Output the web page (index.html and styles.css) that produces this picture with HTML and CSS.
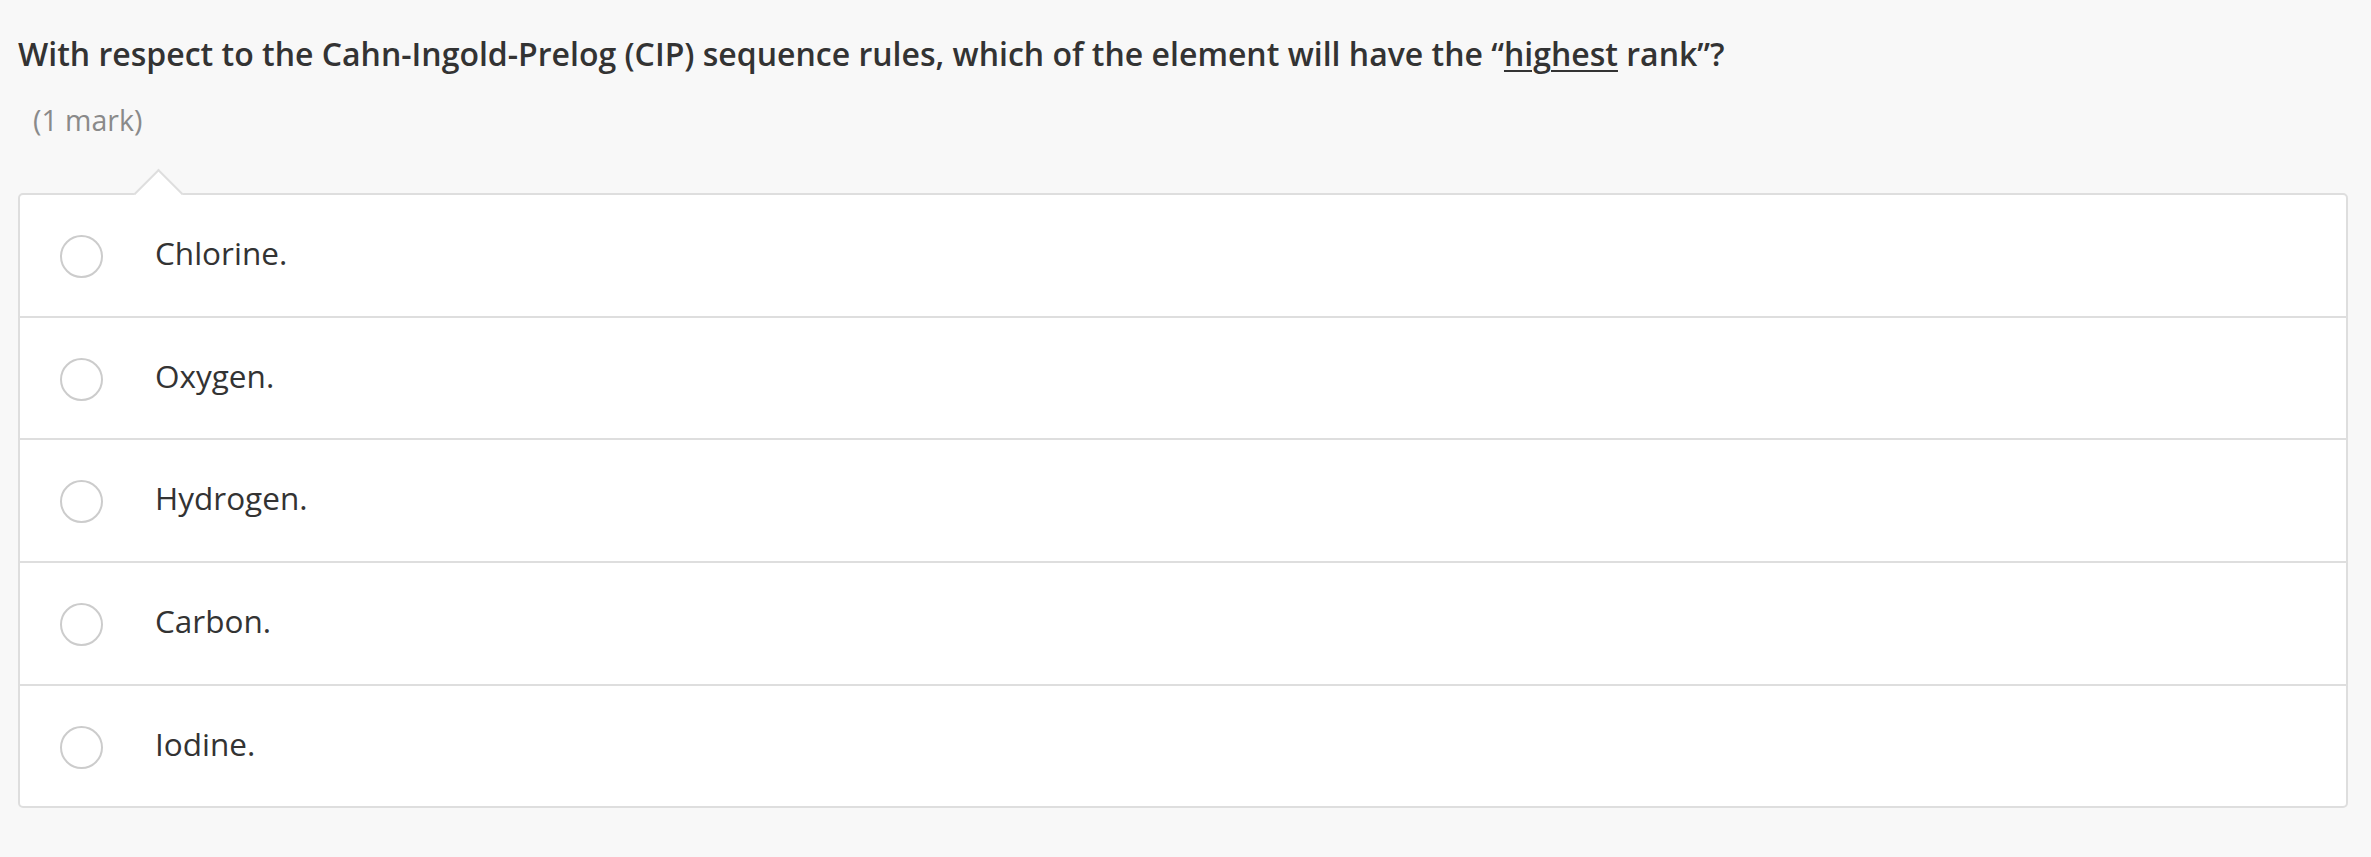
FILE: index.html
```html
<!DOCTYPE html>
<html>
<head>
<meta charset="utf-8">
<link rel="stylesheet" href="styles.css">
</head>
<body>
<div class="page">
  <h1 class="question">With respect to the Cahn-Ingold-Prelog (CIP) sequence rules, which of the element will have the “<u class="em">highest</u> rank”?</h1>
  <div class="mark">(1 mark)</div>
  <div class="card">
    <span class="arrow"></span>
    <label class="option"><span class="radio"></span><span class="label">Chlorine.</span></label>
    <label class="option"><span class="radio"></span><span class="label">Oxygen.</span></label>
    <label class="option"><span class="radio"></span><span class="label">Hydrogen.</span></label>
    <label class="option"><span class="radio"></span><span class="label">Carbon.</span></label>
    <label class="option"><span class="radio"></span><span class="label">Iodine.</span></label>
  </div>
</div>
</body>
</html>
```

FILE: styles.css
```css
html, body {
  margin: 0;
  padding: 0;
  background: #f8f8f8;
}
body {
  font-family: "Open Sans", "Liberation Sans", sans-serif;
  color: #333333;
}
.page {
  padding: 32px 23px 0 18px;
}
.question {
  margin: 0;
  font-size: 32px;
  line-height: 44px;
  font-weight: 600;
  color: #333333;
}
.em {
  text-decoration: underline;
  text-decoration-thickness: 2px;
  text-underline-offset: 4px;
}
.mark {
  margin-top: 26px;
  padding-left: 15px;
  font-size: 28.5px;
  line-height: 36px;
  color: #8a8a8a;
}
.card {
  position: relative;
  margin-top: 55px;
  background: #ffffff;
  border: 2px solid #dedede;
  border-radius: 5px;
}
.arrow {
  position: absolute;
  left: 120.5px;
  top: -19.5px;
  width: 35px;
  height: 35px;
  background: #ffffff;
  border-top: 2px solid #dedede;
  border-left: 2px solid #dedede;
  box-sizing: border-box;
  transform: rotate(45deg);
}
.option {
  position: relative;
  display: flex;
  align-items: center;
  height: 120.7px;
  padding-left: 40px;
  border-bottom: 2px solid #dedede;
}
.option:last-of-type {
  border-bottom: none;
}
.radio {
  flex: none;
  width: 43px;
  height: 43px;
  margin-top: 2px;
  box-sizing: border-box;
  border: 2px solid #cccccc;
  border-radius: 50%;
  background: #ffffff;
}
.label {
  margin-left: 52px;
  margin-bottom: 5px;
  font-size: 31.5px;
  line-height: 44px;
  color: #333333;
}
```
